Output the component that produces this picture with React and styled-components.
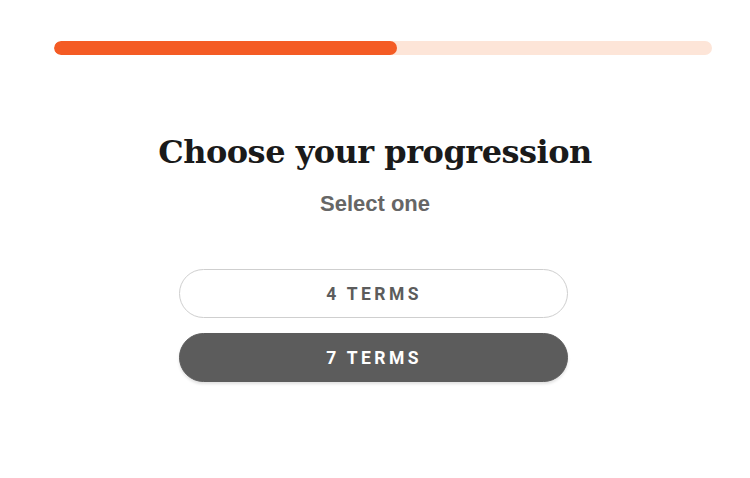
import React from 'react';
import styled, { createGlobalStyle } from 'styled-components';

const GlobalStyle = createGlobalStyle`
    body {
        margin: 0;
        background: #ffffff;
        font-family: "Liberation Sans", Arial, sans-serif;
    }
`;

const Page = styled.div`
    width: 750px;
    height: 478px;
    box-sizing: border-box;
    padding-top: 41px;
    display: flex;
    flex-direction: column;
    align-items: center;
`;

const Track = styled.div`
    width: 658px;
    height: 14px;
    margin-left: 16px;
    border-radius: 7px;
    background-color: #fde5d8;
    overflow: hidden;
`;

const Fill = styled.div`
    height: 100%;
    border-radius: 7px;
    background-color: #f45b24;
`;

const Title = styled.h1`
    margin: 77px 0 0;
    font-family: "DejaVu Serif", Georgia, serif;
    font-weight: 700;
    font-size: 32px;
    line-height: 40px;
    letter-spacing: -0.5px;
    color: #1a1a1a;
`;

const Subtitle = styled.p`
    margin: 19px 0 0;
    font-family: "Liberation Sans", Arial, sans-serif;
    font-weight: 700;
    font-size: 22px;
    line-height: 26px;
    color: #666666;
`;

const Options = styled.div`
    margin-top: 52px;
    margin-right: 3px;
    display: flex;
    flex-direction: column;
    gap: 15px;
`;

const Option = styled.button`
    width: 389px;
    height: 49px;
    border-radius: 25px;
    box-sizing: border-box;
    border: 1px solid ${(p) => (p.$selected ? '#5c5c5c' : '#cfcfcf')};
    background-color: ${(p) => (p.$selected ? '#5c5c5c' : '#ffffff')};
    color: ${(p) => (p.$selected ? '#ffffff' : '#5c5c5c')};
    box-shadow: ${(p) => (p.$selected ? '0 2px 3px rgba(0,0,0,0.12)' : 'none')};
    font-family: Roboto, "Liberation Sans", sans-serif;
    font-weight: 700;
    font-size: 17.5px;
    letter-spacing: 3.4px;
    padding-left: 7px;
    text-transform: uppercase;
    cursor: pointer;
`;

const App = () => {
    const progress = 52.1;
    return (
        <>
            <GlobalStyle />
            <Page>
                <Track>
                    <Fill style={{ width: `${progress}%` }} />
                </Track>
                <Title>Choose your progression</Title>
                <Subtitle>Select one</Subtitle>
                <Options>
                    <Option>4 terms</Option>
                    <Option $selected>7 terms</Option>
                </Options>
            </Page>
        </>
    );
};

export default App;
